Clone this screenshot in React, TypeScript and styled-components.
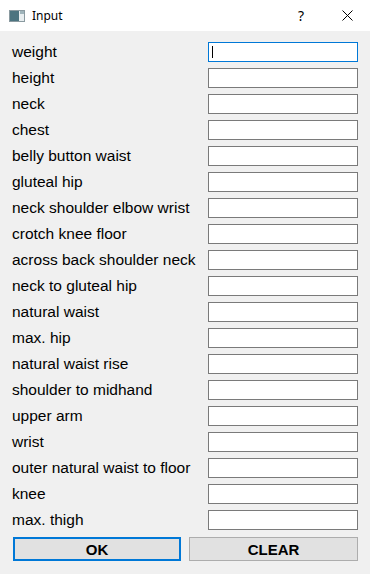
import React from "react";
import styled, { createGlobalStyle } from "styled-components";

const fields = [
  "weight",
  "height",
  "neck",
  "chest",
  "belly button waist",
  "gluteal hip",
  "neck shoulder elbow wrist",
  "crotch knee floor",
  "across back shoulder neck",
  "neck to gluteal hip",
  "natural waist",
  "max. hip",
  "natural waist rise",
  "shoulder to midhand",
  "upper arm",
  "wrist",
  "outer natural waist to floor",
  "knee",
  "max. thigh",
];

const GlobalStyle = createGlobalStyle`
  html, body {
    margin: 0;
    padding: 0;
    background: #f0f0f0;
  }
`;

const Window = styled.div`
  width: 370px;
  height: 574px;
  box-sizing: border-box;
  background: #f0f0f0;
  display: flex;
  flex-direction: column;
  overflow: hidden;
`;

const TitleBar = styled.div`
  height: 31px;
  flex-shrink: 0;
  background: #ffffff;
  display: flex;
  align-items: center;
  padding-left: 9px;
  font-family: "Noto Sans", "Open Sans", sans-serif;
  font-size: 12px;
  color: #000;
`;

const Title = styled.span`
  margin-left: 7px;
  flex: 1;
`;

const TitleButton = styled.div`
  width: 46px;
  height: 31px;
  display: flex;
  align-items: center;
  justify-content: center;
  font-size: 14px;
`;

const Body = styled.div`
  flex: 1;
  padding: 11px 12px 0 12px;
  display: flex;
  flex-direction: column;
`;

const Form = styled.div`
  display: grid;
  grid-template-columns: 1fr 150px;
  row-gap: 6px;
`;

const Label = styled.label`
  font-family: "Liberation Sans", Arial, sans-serif;
  font-size: 15.5px;
  color: #000;
  height: 20px;
  line-height: 20px;
  white-space: nowrap;
`;

const Field = styled.div<{ $focused?: boolean }>`
  height: 20px;
  box-sizing: border-box;
  background: #ffffff;
  border: 1px solid ${(p) => (p.$focused ? "#0078d7" : "#7a7a7a")};
  position: relative;
`;

const Caret = styled.div`
  position: absolute;
  left: 3px;
  top: 3px;
  width: 1px;
  height: 12px;
  background: #000;
`;

const Buttons = styled.div`
  display: grid;
  grid-template-columns: 168px 169px;
  column-gap: 8px;
  margin-top: 7px;
  margin-left: 1px;
`;

const Button = styled.button<{ $default?: boolean }>`
  height: 24px;
  box-sizing: border-box;
  background: #e1e1e1;
  border: ${(p) => (p.$default ? "2px solid #0078d7" : "1px solid #adadad")};
  font-family: "Liberation Sans", Arial, sans-serif;
  font-weight: bold;
  font-size: 15px;
  color: #000;
  padding: 0;
  margin: 0;
`;

const WindowIcon = () => (
  <svg width="16" height="12" viewBox="0 0 16 12">
    <rect x="0.5" y="0.5" width="15" height="11" fill="#e8eef0" stroke="#8a9aa0" />
    <rect x="1" y="1" width="9" height="10" fill="#4c7480" />
    <rect x="11" y="1" width="4" height="3" fill="#9fb4bb" />
  </svg>
);

const CloseIcon = () => (
  <svg width="11" height="11" viewBox="0 0 11 11">
    <path d="M0.5 0.5 L10.5 10.5 M10.5 0.5 L0.5 10.5" stroke="#000" strokeWidth="1" />
  </svg>
);

const App: React.FC = () => {
  return (
    <>
      <GlobalStyle />
      <Window>
        <TitleBar>
          <WindowIcon />
          <Title>Input</Title>
          <TitleButton>?</TitleButton>
          <TitleButton>
            <CloseIcon />
          </TitleButton>
        </TitleBar>
        <Body>
          <Form>
            {fields.map((name, i) => (
              <React.Fragment key={name}>
                <Label>{name}</Label>
                <Field $focused={i === 0}>{i === 0 && <Caret />}</Field>
              </React.Fragment>
            ))}
          </Form>
          <Buttons>
            <Button $default>OK</Button>
            <Button>CLEAR</Button>
          </Buttons>
        </Body>
      </Window>
    </>
  );
};

export default App;
